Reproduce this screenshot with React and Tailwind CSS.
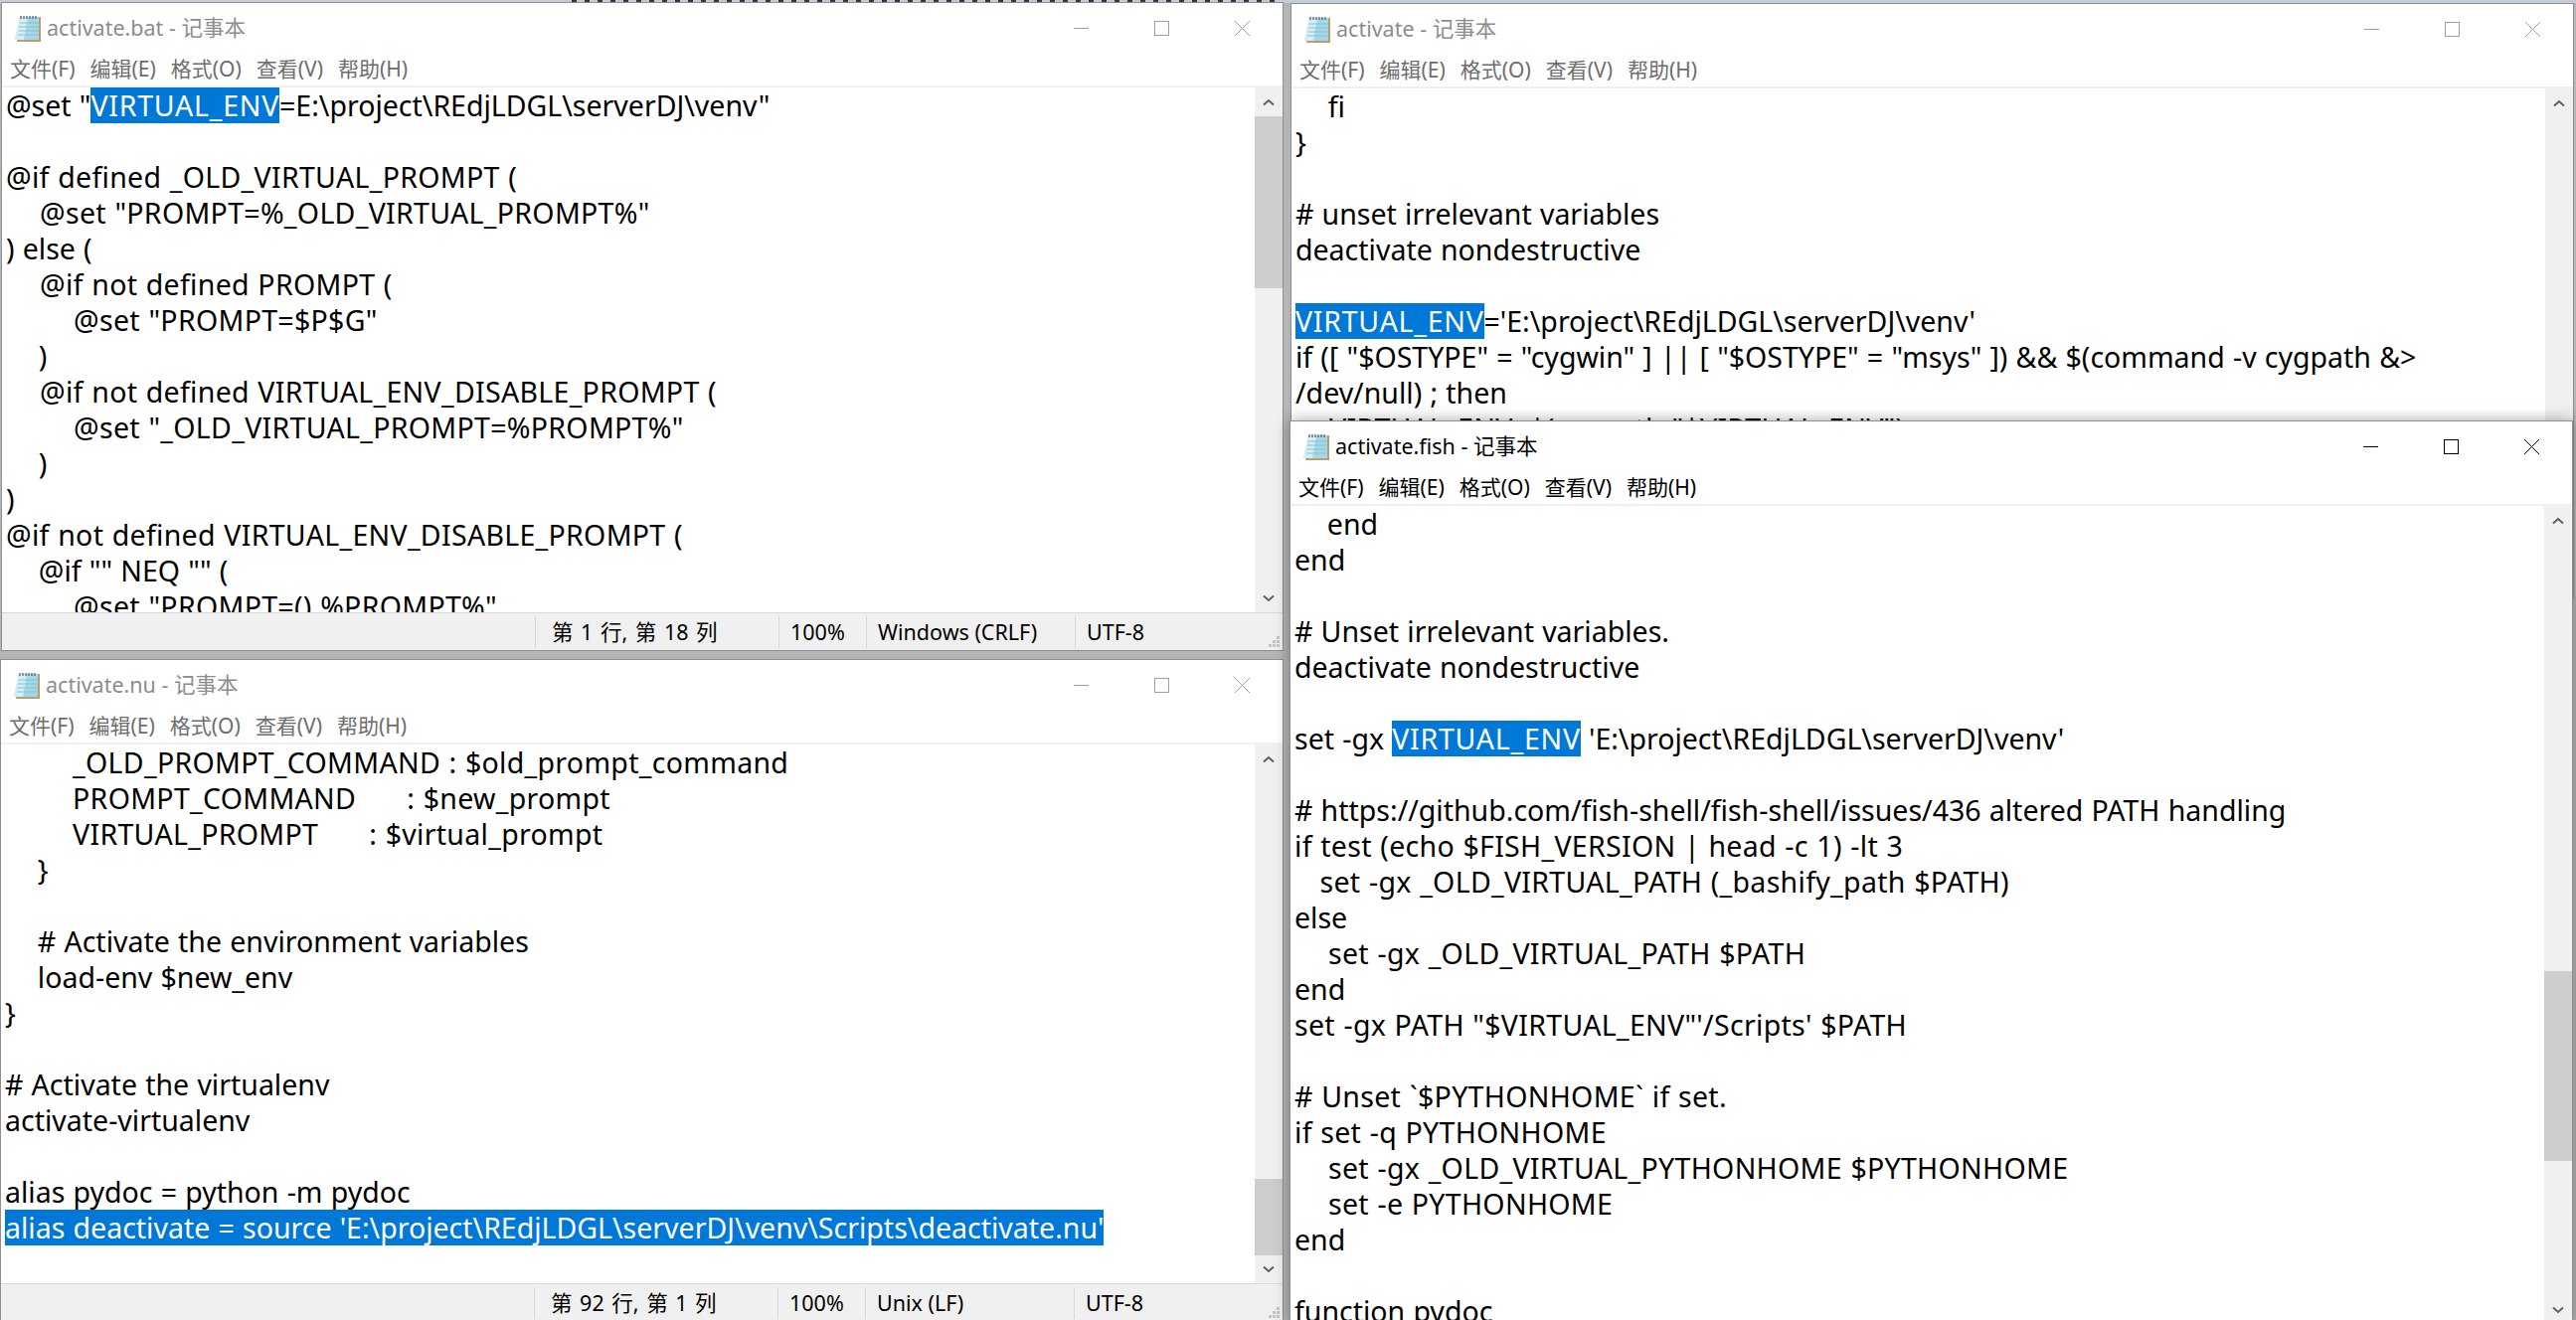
const FONT = "font-['Noto_Sans','Noto_Sans_CJK_SC',sans-serif]"

const batLines = [
  ['@set "', { sel: 'VIRTUAL_ENV' }, '=E:\\project\\REdjLDGL\\serverDJ\\venv"'],
  [''],
  ['@if defined _OLD_VIRTUAL_PROMPT ('],
  ['    @set "PROMPT=%_OLD_VIRTUAL_PROMPT%"'],
  [') else ('],
  ['    @if not defined PROMPT ('],
  ['        @set "PROMPT=$P$G"'],
  ['    )'],
  ['    @if not defined VIRTUAL_ENV_DISABLE_PROMPT ('],
  ['        @set "_OLD_VIRTUAL_PROMPT=%PROMPT%"'],
  ['    )'],
  [')'],
  ['@if not defined VIRTUAL_ENV_DISABLE_PROMPT ('],
  ['    @if "" NEQ "" ('],
  ['        @set "PROMPT=() %PROMPT%"'],
]

const shLines = [
  ['    fi'],
  ['}'],
  [''],
  ['# unset irrelevant variables'],
  ['deactivate nondestructive'],
  [''],
  [{ sel: 'VIRTUAL_ENV' }, "='E:\\project\\REdjLDGL\\serverDJ\\venv'"],
  ['if ([ "$OSTYPE" = "cygwin" ] || [ "$OSTYPE" = "msys" ]) && $(command -v cygpath &>'],
  ['/dev/null) ; then'],
  ['    VIRTUAL_ENV=$(cygpath "$VIRTUAL_ENV")'],
]

const nuLines = [
  ['        _OLD_PROMPT_COMMAND : $old_prompt_command'],
  ['        PROMPT_COMMAND      : $new_prompt'],
  ['        VIRTUAL_PROMPT      : $virtual_prompt'],
  ['    }'],
  [''],
  ['    # Activate the environment variables'],
  ['    load-env $new_env'],
  ['}'],
  [''],
  ['# Activate the virtualenv'],
  ['activate-virtualenv'],
  [''],
  ['alias pydoc = python -m pydoc'],
  [{ sel: "alias deactivate = source 'E:\\project\\REdjLDGL\\serverDJ\\venv\\Scripts\\deactivate.nu'", full: true }],
]

const fishLines = [
  ['    end'],
  ['end'],
  [''],
  ['# Unset irrelevant variables.'],
  ['deactivate nondestructive'],
  [''],
  ['set -gx ', { sel: 'VIRTUAL_ENV' }, " 'E:\\project\\REdjLDGL\\serverDJ\\venv'"],
  [''],
  ['# https://github.com/fish-shell/fish-shell/issues/436 altered PATH handling'],
  ['if test (echo $FISH_VERSION | head -c 1) -lt 3'],
  ['   set -gx _OLD_VIRTUAL_PATH (_bashify_path $PATH)'],
  ['else'],
  ['    set -gx _OLD_VIRTUAL_PATH $PATH'],
  ['end'],
  ['set -gx PATH "$VIRTUAL_ENV"\'/Scripts\' $PATH'],
  [''],
  ['# Unset `$PYTHONHOME` if set.'],
  ['if set -q PYTHONHOME'],
  ['    set -gx _OLD_VIRTUAL_PYTHONHOME $PYTHONHOME'],
  ['    set -e PYTHONHOME'],
  ['end'],
  [''],
  ['function pydoc'],
]

function NotepadIcon() {
  return (
    <svg width="28" height="28" viewBox="0 0 28 28" className="shrink-0">
      <path d="M6 2 L27 2 L27 27 L3 27 Z" fill="#b99f6e" />
      <path d="M6 2 L25 2 L25 25 L1 25 Z" fill="#a4d8e6" />
      <path d="M6 2 L14 2 L10 25 L1 25 Z" fill="#d3f0f6" />
      <path d="M5.6 8 H25 M5 12 H25 M4.4 16 H25 M3.8 20 H25" stroke="#86c0d2" strokeWidth="1" />
      <path d="M7 1 V4 M10 1 V4 M13 1 V4 M16 1 V4 M19 1 V4 M22 1 V4" stroke="#5f6f78" strokeWidth="1.4" />
    </svg>
  )
}

function WindowControls({ active }) {
  const stroke = active ? '#000000' : '#a0a0a0'
  return (
    <div className="flex items-center gap-[66px] pr-[33px]">
      <svg width="15" height="15" viewBox="0 0 15 15">
        <path d="M0 7.5 H15" stroke={stroke} strokeWidth="1" />
      </svg>
      <svg width="15" height="15" viewBox="0 0 15 15">
        <rect x="0.5" y="0.5" width="14" height="14" fill="none" stroke={stroke} strokeWidth="1" />
      </svg>
      <svg width="15" height="15" viewBox="0 0 15 15">
        <path d="M0 0 L15 15 M15 0 L0 15" stroke={stroke} strokeWidth="1" />
      </svg>
    </div>
  )
}

function Caret({ down }) {
  return (
    <svg width="12" height="8" viewBox="0 0 12 8">
      <path d={down ? 'M1 1.5 L6 6 L11 1.5' : 'M1 6.5 L6 2 L11 6.5'} fill="none" stroke="#606060" strokeWidth="2" />
    </svg>
  )
}

function Scrollbar({ thumb }) {
  return (
    <div className="w-[28px] shrink-0 bg-[#f0f0f0] flex flex-col overflow-hidden">
      <div className="h-[29px] shrink-0 flex items-center justify-center">
        <Caret />
      </div>
      <div className="flex-1 min-h-0">{thumb && <div className={`bg-[#cdcdcd] ${thumb}`} />}</div>
      <div className="h-[29px] shrink-0 flex items-center justify-center">
        <Caret down />
      </div>
    </div>
  )
}

function Grip() {
  const dots = [[8, 0], [4, 4], [8, 4], [0, 8], [4, 8], [8, 8]]
  return (
    <svg width="11" height="11" viewBox="0 0 11 11" className="absolute right-[3px] bottom-[3px]">
      {dots.map(([x, y]) => (
        <rect key={`${x}-${y}`} x={x} y={y} width="3" height="3" fill="#c4c4c4" />
      ))}
    </svg>
  )
}

function StatusBar({ pos, eol }) {
  return (
    <div className="relative h-[38px] shrink-0 bg-[#f0f0f0] border-t border-[#d7d7d7] grid grid-cols-[536px_245px_88px_210px_1fr] text-[21.5px] text-black items-center">
      <div />
      <div className="border-l border-[#d7d7d7] h-[32px] pl-[16px] leading-[32px] [word-spacing:2px]">{pos}</div>
      <div className="border-l border-[#d7d7d7] h-[32px] pl-[11px] leading-[32px]">100%</div>
      <div className="border-l border-[#d7d7d7] h-[32px] pl-[11px] leading-[32px]">{eol}</div>
      <div className="border-l border-[#d7d7d7] h-[32px] pl-[11px] leading-[32px]">UTF-8</div>
      <Grip />
    </div>
  )
}

// the original font has wider capitals, so lines full of them get a bit of tracking
const isCaps = (text) => /[A-Z_]{6,}/.test(text) && text.length < 60

function CodeLine({ parts }) {
  const caps = parts.length === 1 && typeof parts[0] === 'string' && isCaps(parts[0])
  return (
    <div className={`h-9 leading-9 whitespace-pre ${caps ? 'tracking-[0.3px]' : ''}`}>
      {parts.map((p, i) =>
        typeof p === 'string' ? (
          <span key={i}>{p}</span>
        ) : (
          <span key={i} className={`inline-block h-9 bg-[#0078d7] text-white ${p.full ? '' : 'tracking-[0.75px]'}`}>{p.sel}</span>
        )
      )}
    </div>
  )
}

function Notepad({ className, title, active, lines, thumb, status }) {
  const tone = active ? 'text-black' : 'text-[#8c8c8c]'
  return (
    <div className={`absolute flex flex-col bg-white border border-[#8f8f8f] overflow-hidden ${FONT} ${className}`}>
      <div className="h-[51px] shrink-0 flex items-center justify-between">
        <div className={`flex items-center gap-[5px] pl-[12px] text-[21.5px] ${tone}`}>
          <NotepadIcon />
          <span>{title} - 记事本</span>
        </div>
        <WindowControls active={active} />
      </div>
      <div className={`h-[32px] shrink-0 flex items-center gap-[15px] pl-[8px] text-[21px] ${active ? 'text-black' : 'text-[#6e6e6e]'}`}>
        <span>文件(F)</span>
        <span>编辑(E)</span>
        <span>格式(O)</span>
        <span>查看(V)</span>
        <span>帮助(H)</span>
      </div>
      <div className="h-[2px] shrink-0 bg-[#f0f0f0]" />
      <div className="flex-1 min-h-0 flex">
        <div className="flex-1 min-w-0 overflow-hidden pl-[4px] text-[28.5px] [word-spacing:0.8px] text-black">
          {lines.map((parts, i) => (
            <CodeLine key={i} parts={parts} />
          ))}
        </div>
        <Scrollbar thumb={thumb} />
      </div>
      {status}
    </div>
  )
}

export default function App() {
  return (
    <div className="relative w-[2591px] h-[1328px] overflow-hidden bg-[#b3b5b8]">
      <div className="h-[3px] bg-[#c6ccd6]" />
      <div className="absolute left-[575px] top-0 w-[715px] h-[2px] bg-[repeating-linear-gradient(90deg,#33363c_0px,#33363c_5px,#c6ccd6_5px,#c6ccd6_13px)]" />
      <Notepad
        className="left-[1px] top-[2px] w-[1290px] h-[653px]"
        title="activate.bat"
        lines={batLines}
        thumb="h-[173px]"
        status={<StatusBar pos="第 1 行, 第 18 列" eol="Windows (CRLF)" />}
      />
      <Notepad
        className="left-[0px] top-[663px] w-[1291px] h-[667px]"
        title="activate.nu"
        lines={nuLines}
        thumb="mt-[408px] h-[77px]"
        status={<StatusBar pos="第 92 行, 第 1 列" eol="Unix (LF)" />}
      />
      <Notepad
        className="left-[1298px] top-[3px] w-[1291px] h-[600px]"
        title="activate"
        lines={shLines}
      />
      <Notepad
        className="left-[1297px] top-[423px] w-[1291px] h-[910px] shadow-[0_0_14px_rgba(0,0,0,0.35)]"
        title="activate.fish"
        active
        lines={fishLines}
        thumb="mt-[439px] h-[191px]"
      />
    </div>
  )
}
